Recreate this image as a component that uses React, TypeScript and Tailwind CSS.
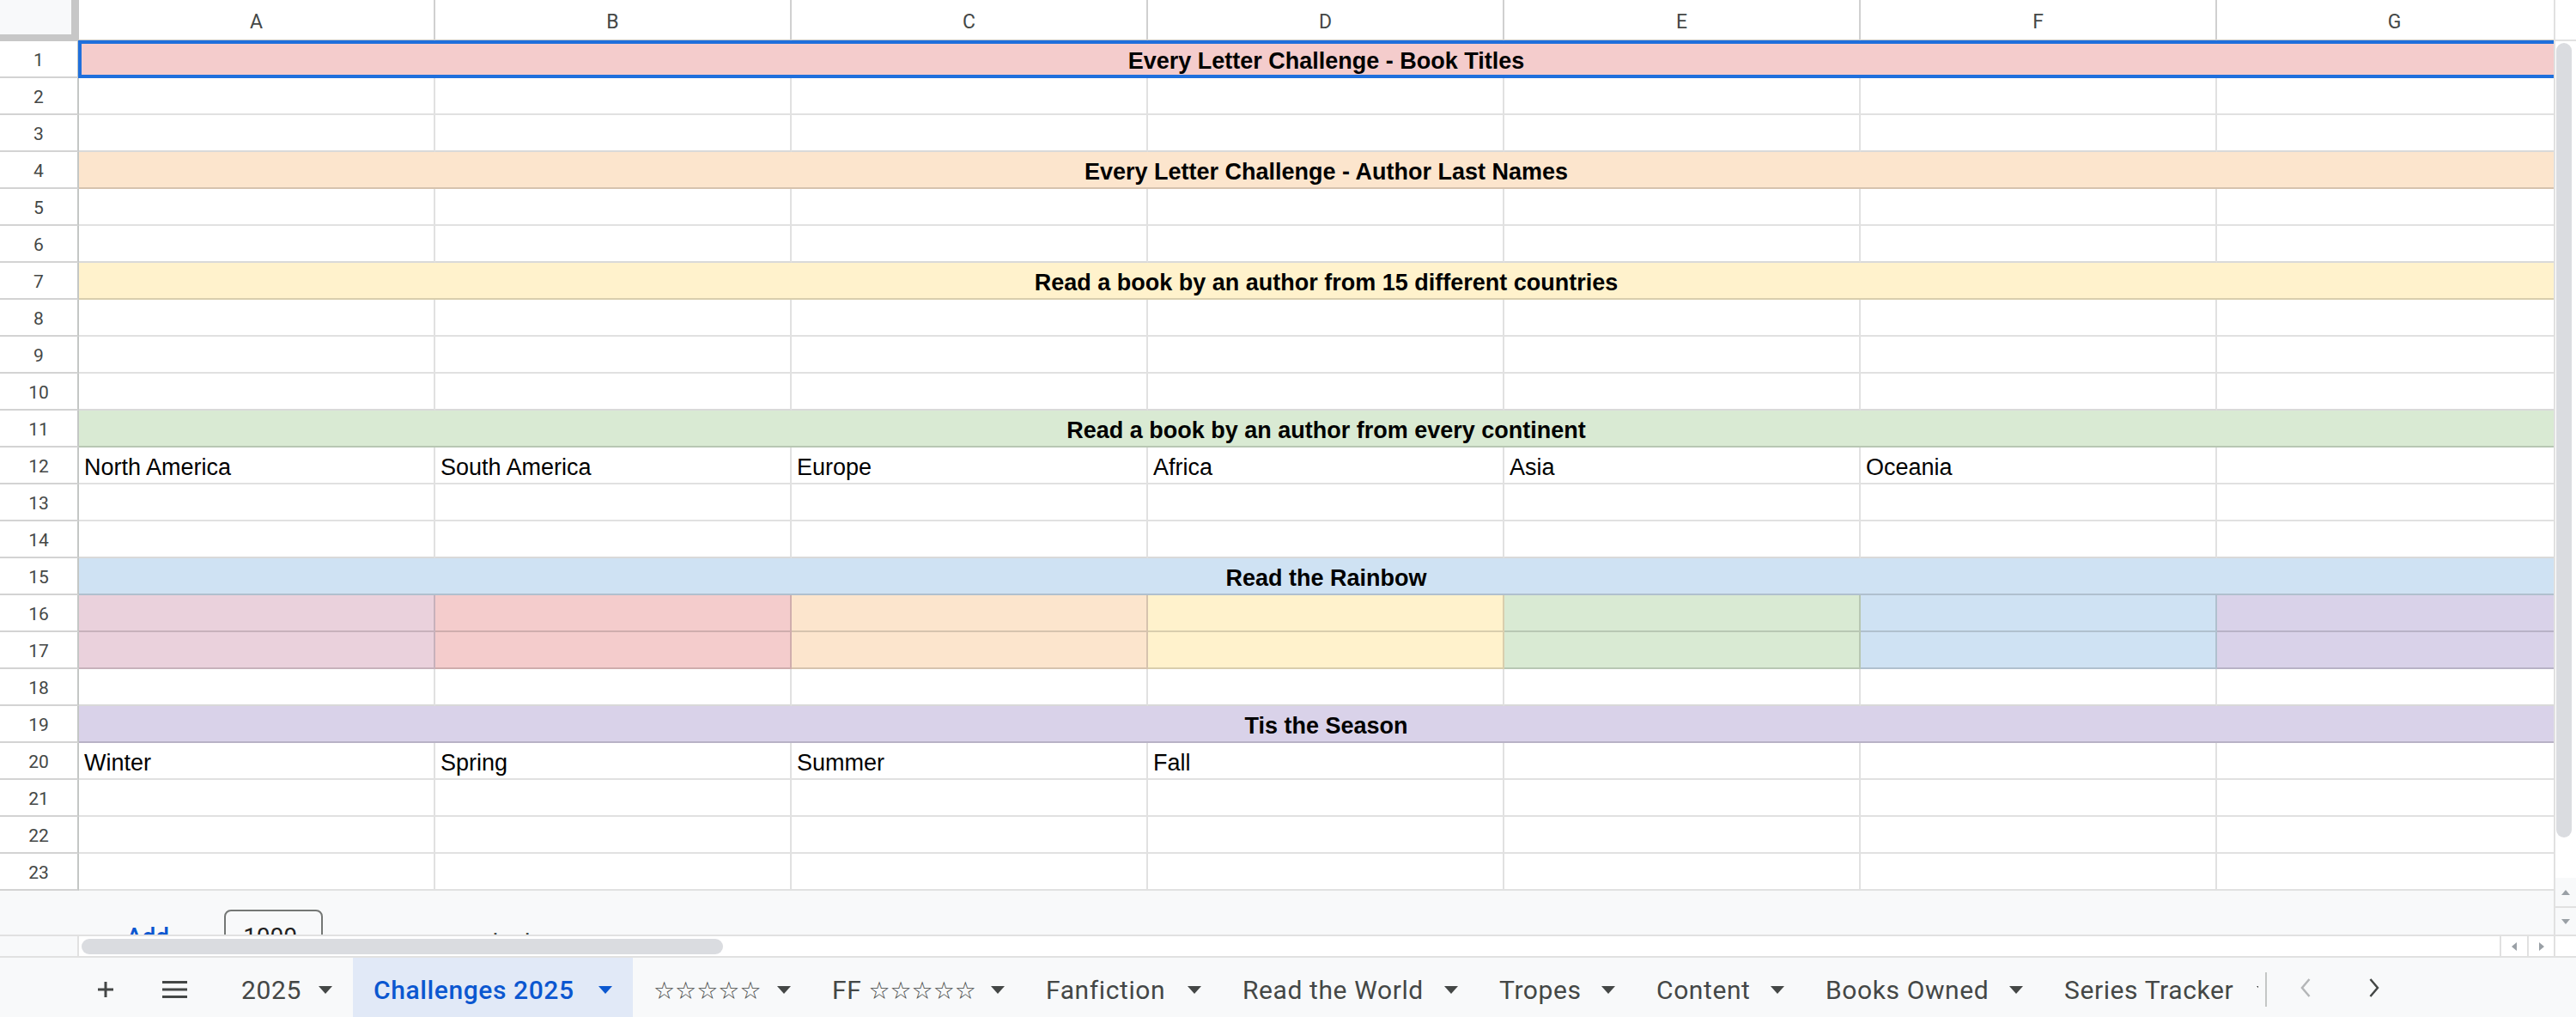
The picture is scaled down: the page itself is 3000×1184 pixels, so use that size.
import React from "react";

const COLS = ["A", "B", "C", "D", "E", "F", "G"];

const BANDS: Record<number, { bg: string; label: string }> = {
  1: { bg: "bg-[#f4cccc]", label: "Every Letter Challenge - Book Titles" },
  4: { bg: "bg-[#fce5cd]", label: "Every Letter Challenge - Author Last Names" },
  7: { bg: "bg-[#fff2cc]", label: "Read a book by an author from 15 different countries" },
  11: { bg: "bg-[#d9ead3]", label: "Read a book by an author from every continent" },
  15: { bg: "bg-[#cfe2f3]", label: "Read the Rainbow" },
  19: { bg: "bg-[#d9d2e9]", label: "Tis the Season" },
};

const RAINBOW = [
  "bg-[#ead1dc]",
  "bg-[#f4cccc]",
  "bg-[#fce5cd]",
  "bg-[#fff2cc]",
  "bg-[#d9ead3]",
  "bg-[#cfe2f3]",
  "bg-[#d9d2e9]",
];

const TEXT_ROWS: Record<number, string[]> = {
  12: ["North America", "South America", "Europe", "Africa", "Asia", "Oceania", ""],
  20: ["Winter", "Spring", "Summer", "Fall", "", "", ""],
};

const STARS = "☆☆☆☆☆";

const TABS = [
  { label: "2025", w: "w-[67px]" },
  { label: "Challenges 2025", w: "w-[239px]", active: true },
  { label: "", stars: true, w: "w-[121px]" },
  { label: "FF ", stars: true, w: "w-[162px]" },
  { label: "Fanfiction", w: "w-[142px]" },
  { label: "Read the World", w: "w-[212px]" },
  { label: "Tropes", w: "w-[96px]" },
  { label: "Content", w: "w-[110px]" },
  { label: "Books Owned", w: "w-[191px]" },
  { label: "Series Tracker", w: "w-[201px]" },
];

const isColored = (r: number) => r in BANDS || r === 16 || r === 17;

function Row({ r }: { r: number }) {
  const band = BANDS[r];
  const rainbow = r === 16 || r === 17;
  const bottom = isColored(r) || isColored(r + 1) ? "border-b-[#00000026]" : "border-b-[#e1e1e1]";
  const texts = TEXT_ROWS[r];

  return (
    <div className="relative flex h-[43px] shrink-0">
      <div className="w-[92px] shrink-0 flex items-center justify-center pt-[5px] bg-white border-r-2 border-b-2 border-r-[#c4c7c5] border-b-[#d3d3d3] font-['Roboto',sans-serif] text-[21px] text-[#444746]">
        {r}
      </div>
      {band ? (
        <div
          className={`w-[2905px] shrink-0 flex items-center justify-center pt-[6px] border-b-2 ${bottom} ${band.bg} font-bold text-[27px] text-black`}
        >
          {band.label}
        </div>
      ) : (
        COLS.map((c, i) => (
          <div
            key={c}
            className={`w-[415px] shrink-0 flex items-center pl-[6px] pt-[6px] border-b-2 border-r-2 ${bottom} ${
              rainbow ? `${RAINBOW[i]} border-r-[#00000026]` : "border-r-[#e1e1e1]"
            } text-[27px] text-black whitespace-nowrap overflow-hidden`}
          >
            {texts ? texts[i] : ""}
          </div>
        ))
      )}
      {r === 1 && (
        <div className="absolute left-[91px] top-[-1px] h-[44px] w-[2910px] border-4 border-[#1f6fdc] pointer-events-none" />
      )}
    </div>
  );
}

function Caret({ active }: { active?: boolean }) {
  return (
    <svg width="16" height="9" viewBox="0 0 16 9" className="ml-[23px] shrink-0">
      <polygon points="0,0 16,0 8,9" fill={active ? "#0b57d0" : "#444746"} />
    </svg>
  );
}

export default function App() {
  return (
    <div className="w-[3000px] h-[1184px] overflow-hidden bg-white flex flex-col font-['Liberation_Sans',Arial,sans-serif]">
      {/* grid + vertical scrollbar */}
      <div className="flex h-[1088px] shrink-0">
        <div className="w-[2974px] shrink-0 overflow-hidden flex flex-col">
          <div className="flex h-[48px] shrink-0">
            <div className="w-[92px] h-[48px] shrink-0 bg-[#f8f9fa] border-r-[9px] border-b-[8px] border-[#c7c7c7]" />
            {COLS.map((c) => (
              <div
                key={c}
                className="w-[415px] shrink-0 flex items-center justify-center pt-[6px] bg-white border-r-2 border-b-2 border-r-[#d0d0d0] border-b-[#c4c7c5] font-['Roboto',sans-serif] text-[23px] text-[#444746]"
              >
                {c}
              </div>
            ))}
          </div>
          {Array.from({ length: 23 }, (_, i) => (
            <Row key={i} r={i + 1} />
          ))}
          <div className="h-[51px] shrink-0 bg-[#f8f9fa] overflow-hidden">
            <div className="flex items-center h-[60px] mt-[22px] font-['Roboto',sans-serif] text-[28px]">
              <span className="ml-[147px] pt-[4px] font-medium text-[#0b57d0]">Add</span>
              <div className="ml-[64px] w-[115px] h-[60px] shrink-0 rounded-[8px] border-2 border-[#747775] flex items-center pl-[20px] pt-[4px] text-[#1f1f1f]">
                1000
              </div>
              <span className="ml-[18px] pt-[18px] text-[#444746] whitespace-nowrap">more rows at the bottom.</span>
            </div>
          </div>
        </div>

        <div className="w-[26px] shrink-0 flex flex-col bg-white border-l-2 border-[#e1e1e1]">
          <div className="h-[48px] shrink-0 border-b-2 border-[#e1e1e1]" />
          <div className="pl-[1px] pt-[2px]">
            <div className="w-[18px] h-[925px] rounded-full bg-[#dadce0]" />
          </div>
          <div className="flex-1" />
          <div className="h-[33px] shrink-0 flex items-center justify-center bg-[#f8f9fa]">
            <svg width="10" height="6" viewBox="0 0 10 6">
              <polygon points="5,0 10,6 0,6" fill="#9aa0a6" />
            </svg>
          </div>
          <div className="h-[33px] shrink-0 flex items-center justify-center bg-[#f8f9fa] border-t-2 border-[#e1e1e1]">
            <svg width="10" height="6" viewBox="0 0 10 6">
              <polygon points="0,0 10,0 5,6" fill="#9aa0a6" />
            </svg>
          </div>
        </div>
      </div>

      {/* horizontal scrollbar */}
      <div className="flex h-[25px] shrink-0 border-t-2 border-[#e1e1e1] bg-white">
        <div className="w-[92px] shrink-0 bg-[#f8f9fa] border-r-2 border-[#e1e1e1]" />
        <div className="flex-1 flex items-center pl-[3px]">
          <div className="w-[747px] h-[18px] rounded-full bg-[#dadce0]" />
        </div>
        <div className="w-[32px] shrink-0 flex items-center justify-center border-l-2 border-[#e1e1e1]">
          <svg width="6" height="10" viewBox="0 0 6 10">
            <polygon points="6,0 6,10 0,5" fill="#9aa0a6" />
          </svg>
        </div>
        <div className="w-[31px] shrink-0 flex items-center justify-center border-l-2 border-[#e1e1e1]">
          <svg width="6" height="10" viewBox="0 0 6 10">
            <polygon points="0,0 6,5 0,10" fill="#9aa0a6" />
          </svg>
        </div>
        <div className="w-[26px] shrink-0 border-l-2 border-[#e1e1e1]" />
      </div>

      {/* sheet tabs */}
      <div className="flex-1 flex items-stretch border-t-2 border-[#e1e1e1] bg-[#f8f9fa] font-['Roboto','DejaVu_Sans',sans-serif] text-[30px] tracking-[0.02em] text-[#444746]">
        <div className="ml-[103px] w-[40px] flex items-center justify-center pt-[5px]">
          <svg width="20" height="20" viewBox="0 0 20 20">
            <path d="M10 1v18M1 10h18" stroke="#444746" strokeWidth="3" fill="none" />
          </svg>
        </div>
        <div className="ml-[40px] w-[40px] flex items-center justify-center pt-[5px]">
          <svg width="29" height="20" viewBox="0 0 29 20">
            <path d="M0 1.5h29M0 10h29M0 18.5h29" stroke="#444746" strokeWidth="3" fill="none" />
          </svg>
        </div>
        <div className="ml-[34px] w-[2373px] shrink-0 flex overflow-hidden">
          {TABS.map((t, i) => (
            <div
              key={i}
              className={`shrink-0 flex items-center pl-[24px] pr-[24px] pt-[6px] ${
                t.active ? "bg-[#e1e9f7] text-[#0b57d0] font-medium" : ""
              }`}
            >
              <span className={`${t.w} shrink-0 whitespace-nowrap`}>
                {t.label}
                {t.stars && (
                  <span className="font-['DejaVu_Sans',sans-serif] text-[28px] tracking-normal">{STARS}</span>
                )}
              </span>
              <Caret active={t.active} />
            </div>
          ))}
        </div>
        <div className="ml-[8px] w-[2px] h-[40px] self-center mt-[4px] bg-[#c4c7c5]" />
        <div className="ml-[25px] w-[40px] flex items-center justify-center">
          <svg width="14" height="24" viewBox="0 0 14 24">
            <path d="M11.5 2L3 12l8.5 10" stroke="#b4b6b8" strokeWidth="2.5" fill="none" />
          </svg>
        </div>
        <div className="ml-[40px] w-[40px] flex items-center justify-center">
          <svg width="14" height="24" viewBox="0 0 14 24">
            <path d="M2.5 2L11 12l-8.5 10" stroke="#444746" strokeWidth="2.5" fill="none" />
          </svg>
        </div>
      </div>
    </div>
  );
}
